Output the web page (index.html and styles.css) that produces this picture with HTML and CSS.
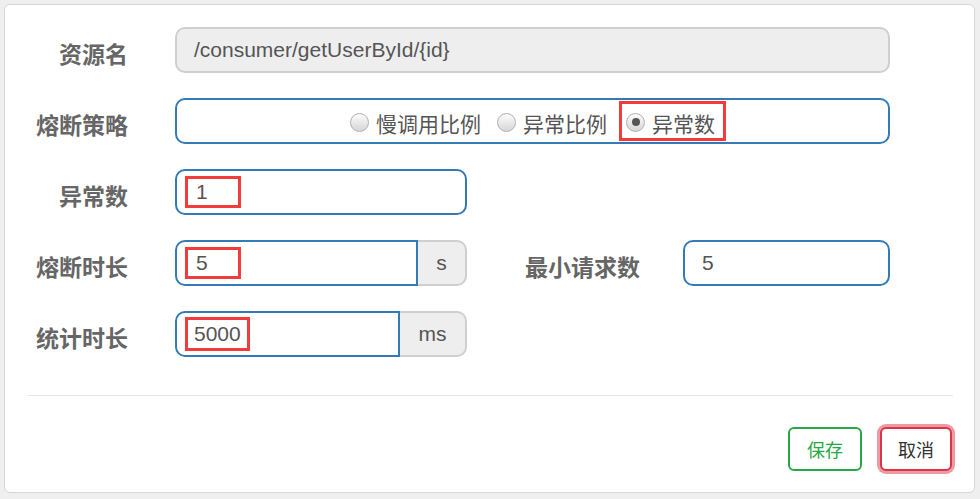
FILE: index.html
```html
<!DOCTYPE html>
<html lang="zh">
<head>
<meta charset="utf-8">
<link rel="stylesheet" href="styles.css">
</head>
<body>
<div class="card">
  <div class="form">
    <div class="label">资源名</div>
    <div class="field wide readonly">/consumer/getUserById/{id}</div>

    <div class="label">熔断策略</div>
    <div class="field wide radios">
      <span class="opt"><span class="radio"></span>慢调用比例</span>
      <span class="opt"><span class="radio"></span>异常比例</span>
      <span class="opt mark"><span class="radio checked"></span>异常数</span>
    </div>

    <div class="label">异常数</div>
    <div class="field"><span class="val-mark">1</span></div>

    <div class="label">熔断时长</div>
    <div class="group">
      <div class="field grouped"><span class="val-mark">5</span></div>
      <div class="addon addon-s">s</div>
    </div>
    <div class="label label2">最小请求数</div>
    <div class="field plain">5</div>

    <div class="label">统计时长</div>
    <div class="group">
      <div class="field grouped"><span class="val-mark wide-mark">5000</span></div>
      <div class="addon addon-ms">ms</div>
    </div>
  </div>
  <div class="divider"></div>
  <div class="footer">
    <button class="btn btn-save">保存</button>
    <button class="btn btn-cancel">取消</button>
  </div>
</div>
</body>
</html>
```

FILE: styles.css
```css
html, body {
  margin: 0;
  padding: 0;
}
body {
  background: #efefef;
  padding: 4px 5px 6px 4px;
  font-family: "Liberation Sans", "Noto Sans CJK SC", sans-serif;
}
.card {
  background: #fff;
  border: 1px solid #d6d6d6;
  border-radius: 6px;
  height: 489px;
  box-sizing: border-box;
}
.form {
  display: grid;
  grid-template-columns: 170px 292px 216px 207px;
  grid-auto-rows: 46px;
  row-gap: 25px;
  padding-top: 22px;
}
.label {
  font-family: "Noto Sans CJK SC", sans-serif;
  font-weight: 700;
  font-size: 23px;
  color: #666;
  text-align: right;
  padding-right: 47px;
  padding-top: 6px;
  box-sizing: border-box;
  display: flex;
  align-items: center;
  justify-content: flex-end;
  grid-column: 1;
}
.label2 {
  grid-column: 3;
  padding-right: 43px;
}
.field {
  box-sizing: border-box;
  height: 46px;
  border: 2px solid #337ab7;
  border-radius: 10px;
  font-size: 21px;
  color: #555;
  display: flex;
  align-items: center;
  padding-left: 8px;
}
.wide {
  grid-column: 2 / 5;
}
.readonly {
  background: #eee;
  border-color: #cfcfcf;
  padding-left: 17px;
}
.plain {
  padding-left: 17px;
}
.radios {
  justify-content: center;
  padding-left: 0;
  padding-top: 4px;
  gap: 16px;
  font-family: "Noto Sans CJK SC", sans-serif;
  font-size: 21px;
  color: #555;
}
.opt {
  display: inline-flex;
  align-items: center;
  gap: 7px;
  line-height: 28px;
}
.opt .radio {
  margin-top: -2px;
}
.opt.mark {
  position: relative;
  margin-left: 3px;
}
.opt.mark::after {
  content: "";
  position: absolute;
  left: -7px;
  right: -11px;
  top: -8px;
  bottom: -4px;
  border: 3px solid #f23c3c;
}
.radio {
  width: 19px;
  height: 19px;
  box-sizing: border-box;
  border-radius: 50%;
  border: 1px solid #b0b0b0;
  background: linear-gradient(#fdfdfd, #d5d5d5);
  display: inline-flex;
  align-items: center;
  justify-content: center;
}
.radio.checked::after {
  content: "";
  width: 8px;
  height: 8px;
  border-radius: 50%;
  background: #555;
}
.val-mark {
  box-sizing: border-box;
  display: inline-flex;
  align-items: center;
  height: 32px;
  min-width: 56px;
  border: 3px solid #f23c3c;
  padding: 0 8px;
}
.wide-mark {
  height: 34px;
  padding: 0 6px;
  min-width: 0;
}
.group {
  display: flex;
  height: 46px;
}
.grouped {
  flex: 1;
  border-radius: 10px 0 0 10px;
}
.addon {
  box-sizing: border-box;
  background: #eee;
  border: 2px solid #cfcfcf;
  border-left: none;
  border-radius: 0 10px 10px 0;
  display: flex;
  align-items: center;
  justify-content: center;
  font-size: 21px;
  color: #555;
}
.addon-s {
  width: 49px;
}
.addon-ms {
  width: 67px;
}
.divider {
  height: 1px;
  background: #e5e5e5;
  margin: 38px 21px 0 23px;
}
.footer {
  display: flex;
  justify-content: flex-end;
  gap: 18px;
  padding: 31px 22px 0 0;
}
.btn {
  font-family: "Noto Sans CJK SC", sans-serif;
  font-size: 18px;
  background: #fff;
  border: 2px solid;
  border-radius: 6px;
  height: 44px;
  box-sizing: border-box;
  cursor: pointer;
}
.btn-save {
  width: 74px;
  border-color: #28a745;
  color: #28a745;
}
.btn-cancel {
  width: 72px;
  border-color: #dc3545;
  color: #333;
  box-shadow: 0 0 0 3px rgba(220, 53, 69, 0.5);
}
```
